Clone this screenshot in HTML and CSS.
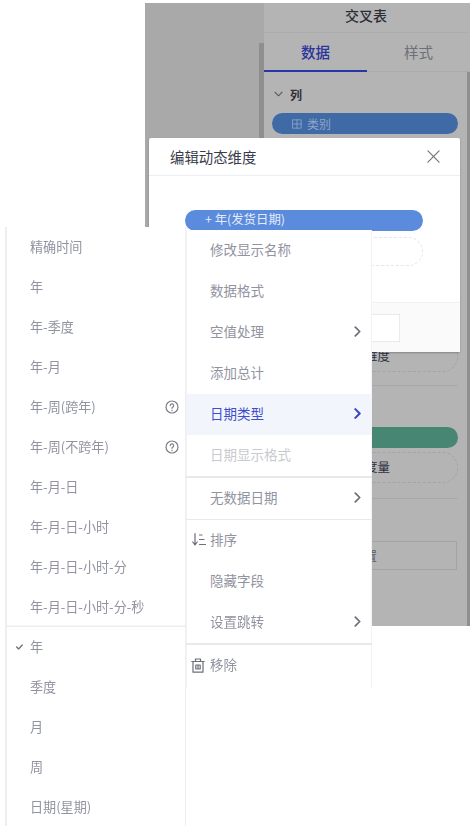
FILE: index.html
```html
<!DOCTYPE html>
<html lang="zh-CN">
<head>
<meta charset="utf-8">
<title>编辑动态维度</title>
<link rel="stylesheet" href="styles.css">
</head>
<body>
<div class="canvas">
  <section class="backdrop">
    <div class="left-pane"><div class="scrollbar"></div></div>
    <div class="right-pane">
      <header class="panel-title">交叉表</header>
      <nav class="tabs">
        <span class="tab tab-active">数据</span>
        <span class="tab">样式</span>
      </nav>
      <div class="panel-body">
        <div class="group group-columns">
          <div class="group-title">
            <svg class="chev-down" viewBox="0 0 10 6"><path d="M1 1l4 4 4-4"/></svg>
            <span>列</span>
          </div>
          <div class="pill pill-blue">
            <svg class="table-icon" viewBox="0 0 12 12"><path d="M1 1h10v10H1zM1 6h10M6 1v10"/></svg>
            <span>类别</span>
          </div>
          <div class="drop drop-dim">拖动维度</div>
        </div>
        <div class="group group-values">
          <div class="pill pill-green"></div>
          <div class="drop drop-measure">添加度量</div>
        </div>
        <div class="group group-setting">
          <div class="setting-box">设置</div>
        </div>
      </div>
    </div>
  </section>

  <section class="modal">
    <header class="modal-head">
      <span>编辑动态维度</span>
      <svg class="close" viewBox="0 0 14 14"><path d="M1 1l12 12M13 1L1 13"/></svg>
    </header>
    <div class="modal-body">
      <div class="modal-pill">+ 年(发货日期)</div>
      <div class="modal-drop"></div>
    </div>
    <footer class="modal-foot"><div class="foot-btn"></div></footer>
  </section>

  <ul class="menu menu-main">
    <li class="item">修改显示名称</li>
    <li class="item">数据格式</li>
    <li class="item">空值处理<svg class="chev" viewBox="0 0 8 12"><path d="M1.500 1l5 5-5 5"/></svg></li>
    <li class="item">添加总计</li>
    <li class="item item-active">日期类型<svg class="chev" viewBox="0 0 8 12"><path d="M1.500 1l5 5-5 5"/></svg></li>
    <li class="item item-disabled">日期显示格式</li>
    <li class="sep"></li>
    <li class="item">无数据日期<svg class="chev" viewBox="0 0 8 12"><path d="M1.500 1l5 5-5 5"/></svg></li>
    <li class="sep"></li>
    <li class="item">
      <svg class="lead" viewBox="0 0 14 14"><path d="M3 1v11.500M.8 9.500L3 12.500l2.200-3M7.500 2.500h2.500M7.500 7h4.500M7.500 12h6"/></svg>排序
    </li>
    <li class="item">隐藏字段</li>
    <li class="item">设置跳转<svg class="chev" viewBox="0 0 8 12"><path d="M1.500 1l5 5-5 5"/></svg></li>
    <li class="sep"></li>
    <li class="item">
      <svg class="lead lead-trash" viewBox="0 0 14 15"><path d="M.8 3.500h12.400M4.500 3.500V1h5v2.500M2 3.500v10.700h10V3.500M4.800 7v4M7 7v4M9.200 7v4M4.800 11h4.400M4.800 7h4.400"/></svg>移除
    </li>
  </ul>

  <ul class="menu menu-sub">
    <li class="row">精确时间</li>
    <li class="row">年</li>
    <li class="row">年-季度</li>
    <li class="row">年-月</li>
    <li class="row">年-周(跨年)<svg class="help" viewBox="0 0 14 14"><circle cx="7" cy="7" r="6"/><path d="M5.300 5.600a1.700 1.700 0 1 1 2.500 1.500c-.6.300-.8.600-.8 1.200M7 10v.6"/></svg></li>
    <li class="row">年-周(不跨年)<svg class="help" viewBox="0 0 14 14"><circle cx="7" cy="7" r="6"/><path d="M5.300 5.600a1.700 1.700 0 1 1 2.500 1.500c-.6.300-.8.600-.8 1.200M7 10v.6"/></svg></li>
    <li class="row">年-月-日</li>
    <li class="row">年-月-日-小时</li>
    <li class="row">年-月-日-小时-分</li>
    <li class="row">年-月-日-小时-分-秒</li>
    <li class="row row-split"><svg class="check" viewBox="0 0 8 6"><path d="M.8 3l2.200 2.200L7.200.8"/></svg>年</li>
    <li class="row">季度</li>
    <li class="row">月</li>
    <li class="row">周</li>
    <li class="row">日期(星期)</li>
  </ul>
</div>
</body>
</html>
```
FILE: styles.css
```css
* { box-sizing: border-box; }
html, body { margin: 0; padding: 0; background: #fff; }
body {
  width: 474px;
  height: 826px;
  overflow: hidden;
  font-family: "Noto Sans CJK SC", "Noto Sans", sans-serif;
  color: #91939f;
}
ul { list-style: none; margin: 0; padding: 0; }
svg { fill: none; stroke: currentColor; stroke-linecap: round; stroke-linejoin: round; }

.canvas { position: relative; width: 474px; height: 826px; filter: blur(0.4px); }

/* dimmed page behind the dialog */
.backdrop {
  position: absolute;
  left: 145px;
  top: 3px;
  width: 325px;
  height: 623px;
  display: flex;
  background: #b4b4b4;
}
.left-pane { flex: 0 0 119px; background: #a9a9a9; position: relative; }
.scrollbar { position: absolute; right: 0; top: 40px; bottom: 0; width: 5px; background: #8f8f8f; }
.right-pane { flex: 1; display: flex; flex-direction: column; min-width: 0; }
.panel-title {
  height: 30px;
  line-height: 25px;
  text-align: center;
  font-size: 14px;
  font-weight: 500;
  color: #2b2d36;
  border-bottom: 1px solid #adadad;
  padding-right: 2px;
}
.tabs { display: flex; height: 39px; border-bottom: 1px solid #acacac; }
.tab { flex: 1; text-align: center; line-height: 38px; font-size: 14.500px; color: #6d6f78; }
.tab-active { color: #2c349e; border-bottom: 2px solid #2a35a8; height: 39px; font-weight: 500; }
.panel-body { flex: 1; border-right: 3px solid #8f8f8f; padding: 0 9px 0 8px; display: flex; flex-direction: column; }
.group-columns { height: 314px; padding-top: 12px; border-bottom: 1px solid #a8a8a8; }
.group-title {
  display: flex;
  align-items: center;
  gap: 7px;
  height: 20px;
  padding-left: 2px;
  font-size: 12px;
  font-weight: 700;
  color: #2f3038;
}
.chev-down { width: 9px; height: 6px; color: #55575f; stroke-width: 1.200; }
.pill { border-radius: 11px; height: 21px; }
.pill-blue {
  margin-top: 9px;
  background: #3f6aa6;
  color: #8fa6c9;
  display: flex;
  align-items: center;
  gap: 5px;
  padding-left: 20px;
  font-size: 12px;
}
.table-icon { width: 10px; height: 10px; stroke-width: 1; }
.drop {
  border: 1px dashed #a4a4a4;
  border-radius: 15px;
  height: 31px;
  line-height: 28px;
  text-align: center;
  font-size: 12.500px;
  color: #2e3040;
}
.drop-dim { margin-top: 207px; }
.group-values { height: 113px; padding-top: 41px; border-bottom: 1px solid #a8a8a8; }
.pill-green { background: #478672; height: 21px; }
.drop-measure { margin-top: 4px; }
.group-setting { flex: 1; padding-top: 42px; }
.setting-box {
  height: 29px;
  line-height: 27px;
  text-align: center;
  font-size: 12.500px;
  color: #5b5d68;
  border: 1px solid #a3a3a3;
  margin-right: 1px;
}

/* dialog */
.modal {
  position: absolute;
  left: 149px;
  top: 138px;
  width: 311px;
  height: 214px;
  background: #fff;
  display: flex;
  flex-direction: column;
  box-shadow: 0 1px 2px rgba(0,0,0,.25);
  border-radius: 2px;
}
.modal-head {
  height: 38px;
  flex: none;
  display: flex;
  align-items: center;
  justify-content: space-between;
  padding: 0 20px 0 21px;
  font-size: 14.400px;
  color: #3a3c4a;
  border-bottom: 1px solid #eceef2;
}
.close { width: 13px; height: 13px; color: #777; stroke-width: 1.300; }
.modal-body { flex: 1; padding: 34px 37px 0 36px; }
.modal-pill {
  height: 21px;
  line-height: 19px;
  border-radius: 11px;
  background: #5b8bdd;
  color: #e4ecfa;
  font-size: 12.400px;
  padding-left: 20px;
}
.modal-drop { height: 29px; margin-top: 6px; border: 1px dashed #e6e6e8; border-radius: 15px; }
.modal-foot { height: 50px; flex: none; background: #fafafa; border-top: 1px solid #f1f1f1; padding: 11px 60px 10px 0; }
.foot-btn { height: 28px; background: #fff; border: 1px solid #eaeaea; }

/* context menus */
.menu { position: absolute; background: #fff; }
.menu-main {
  left: 186px;
  top: 230px;
  width: 186px;
  height: 458px;
  font-size: 13.500px;
  border-right: 1px solid #f3f3f5;
  border-left: 1px solid #f3f3f5;
}
.item {
  position: relative;
  height: 41px;
  display: flex;
  align-items: center;
  padding: 0 0 1px 23px;
  line-height: 1;
}
.item-active { background: #f3f5fc; color: #3f4fcc; }
.item-disabled { color: #c8cad0; }
.sep { height: 1.500px; background: #e9e9ec; margin: 0 -1px; }
.chev { position: absolute; right: 10px; top: 14px; width: 7px; height: 11px; stroke-width: 2; color: #6c6e7a; }
.item-active .chev { color: #3a47c4; stroke-width: 2.400; }
.lead { position: absolute; left: 5px; top: 12px; width: 14px; height: 15px; stroke-width: 1.200; color: #6c6e7a; }
.lead-trash { left: 4px; top: 13px; }

.menu-sub {
  left: 5px;
  top: 227px;
  width: 181px;
  height: 599px;
  font-size: 13.100px;
  border-left: 2px solid #eeeef0;
  border-right: 1px solid #eeeef0;
}
.row {
  position: relative;
  height: 40px;
  display: flex;
  align-items: center;
  padding: 0 0 1px 23px;
  line-height: 1;
}
.row-split { box-shadow: 0 -1.500px 0 #eeeef0; }
.help { position: absolute; right: 6px; top: 13px; width: 14px; height: 14px; stroke-width: 1.200; color: #7d7f88; }
.check { position: absolute; left: 9px; top: 17px; width: 7px; height: 6px; stroke-width: 1.500; color: #6c6e7a; }
```
